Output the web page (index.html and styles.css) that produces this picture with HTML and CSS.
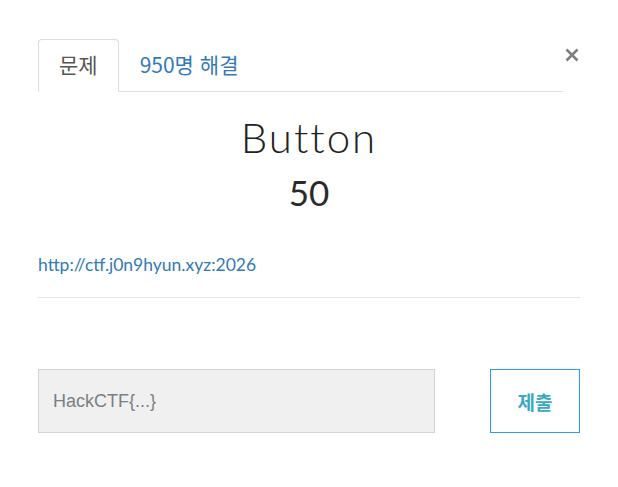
FILE: index.html
```html
<!DOCTYPE html>
<html lang="ko">
<head>
<meta charset="utf-8">
<link rel="stylesheet" href="styles.css">
</head>
<body>
<div class="modal">
  <div class="header">
    <ul class="tabs">
      <li class="tab active">문제</li>
      <li class="tab">950명 해결</li>
    </ul>
    <button class="close" aria-label="닫기">
      <svg width="14" height="14" viewBox="0 0 14 14"><path d="M1.5 1.5 L12.5 12.5 M12.5 1.5 L1.5 12.5" stroke="#7f7f7f" stroke-width="2.6" stroke-linecap="butt"/></svg>
    </button>
  </div>
  <h2 class="title">Button</h2>
  <h3 class="value">50</h3>
  <p class="desc"><a class="link" href="#">http://ctf.j0n9hyun.xyz:2026</a></p>
  <hr class="rule">
  <form class="submit-row">
    <input class="flag" type="text" placeholder="HackCTF{...}">
    <button class="submit" type="button">제출</button>
  </form>
</div>
</body>
</html>
```
FILE: styles.css
```css
html, body {
  margin: 0;
  padding: 0;
  background: #fff;
}
body {
  font-family: "Noto Sans CJK KR", "Noto Sans", sans-serif;
  color: #333;
}
.modal {
  padding: 39px 38px 0 38px;
}
.header {
  display: flex;
  align-items: flex-start;
}
.tabs {
  list-style: none;
  margin: 0;
  padding: 0;
  display: flex;
  width: 525px;
  border-bottom: 1px solid #dddddd;
}
.tab {
  height: 51px;
  line-height: 49px;
  padding: 0 20px;
  margin-bottom: -1px;
  border: 1px solid transparent;
  border-radius: 4px 4px 0 0;
  font-size: 21px;
  color: #337ab7;
}
.tab.active {
  border-color: #dddddd #dddddd transparent #dddddd;
  background: #fff;
  color: #555;
}
.close {
  margin: 9px 0 0 2px;
  padding: 0;
  border: 0;
  background: none;
  width: 14px;
  height: 14px;
  display: flex;
}
.title {
  margin: 21px 0 0 0;
  text-align: center;
  font-family: "Lato", sans-serif;
  font-weight: 300;
  font-size: 42px;
  letter-spacing: 2px;
  line-height: 48px;
  color: #222;
}
.value {
  margin: 11px 0 0 0;
  text-align: center;
  font-family: "Lato", sans-serif;
  font-weight: 400;
  font-size: 35px;
  line-height: 40px;
  color: #2a2a2a;
}
.desc {
  margin: 41px 0 0 0;
  font-family: "Lato", sans-serif;
  font-size: 17.5px;
  line-height: 24px;
}
.link {
  color: #337ab7;
  text-decoration: none;
}
.rule {
  margin: 20px 0 0 0;
  border: 0;
  border-top: 1px solid #e5e5e5;
}
.submit-row {
  margin-top: 71px;
  display: flex;
  justify-content: space-between;
}
.flag {
  box-sizing: border-box;
  width: 397px;
  height: 64px;
  margin: 0;
  padding: 0 14px;
  border: 1px solid #cfd4da;
  background: #f0f0f0;
  font-family: "Liberation Sans", sans-serif;
  font-size: 18px;
  color: #495057;
  outline: none;
}
.flag::placeholder {
  color: #7a7f86;
  opacity: 1;
}
.submit {
  box-sizing: border-box;
  width: 90px;
  height: 64px;
  margin: 0;
  border: 1px solid #2c9cf2;
  background: #fff;
  font-family: "Noto Sans CJK KR", sans-serif;
  font-weight: 700;
  font-size: 19px;
  color: #3aa9c3;
}
```
